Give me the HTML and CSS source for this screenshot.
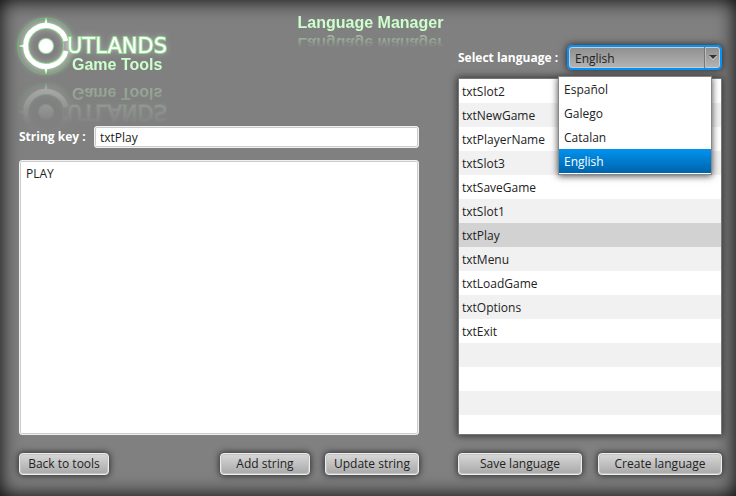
FILE: index.html
```html
<!DOCTYPE html>
<html lang="en">
<head>
<meta charset="utf-8">
<title>Language Manager</title>
<link rel="stylesheet" href="styles.css">
</head>
<body>
<main class="app">
  <h1 class="title">Language Manager</h1>

  <section class="editor">
    <div class="brand">
      <svg class="emblem" viewBox="0 0 60 64" aria-hidden="true">
        <circle class="glow" cx="29" cy="30" r="22"/>
        <path class="orbit" d="M55.500 22A28 28 0 1 0 53 44"/>
        <path class="spikes" d="M29 1L32 10H26ZM29 59L32 50H26ZM1 30L10 27V33Z"/>
        <path class="ring-edge" d="M49 25A20.500 20.500 0 1 0 49 35"/>
        <circle class="inner" cx="29" cy="30" r="17.500"/>
        <path class="ring" d="M49 25A20.500 20.500 0 1 0 49 35"/>
        <path class="tips" d="M29 2L31 11H27ZM29 58L31 49H27ZM2 30L11 28V32Z"/>
        <circle class="core-edge" cx="29" cy="30" r="8"/>
        <circle class="core" cx="29" cy="30" r="7"/>
      </svg>
      <div class="wordmark">
        <span class="name">UTLANDS</span>
        <span class="suite">Game Tools</span>
      </div>
    </div>
    <div class="field">
      <label for="key">String key :</label>
      <input id="key" type="text" value="txtPlay">
    </div>
    <textarea id="value" aria-label="String value">PLAY</textarea>
    <div class="actions">
      <button class="back" type="button">Back to tools</button>
      <button type="button">Add string</button>
      <button type="button">Update string</button>
    </div>
  </section>

  <section class="strings">
    <div class="picker">
      <label for="language">Select language :</label>
      <div class="combo">
        <select id="language">
          <option>Español</option>
          <option>Galego</option>
          <option>Catalan</option>
          <option selected>English</option>
        </select>
        <span class="arrow"><svg viewBox="0 0 8 5" aria-hidden="true"><path class="lip" d="M0 1H8L4 5Z"/><path d="M0 0H8L4 4Z"/></svg></span>
        <ul class="menu" role="listbox" aria-label="Languages">
          <li role="option">Español</li>
          <li role="option">Galego</li>
          <li role="option">Catalan</li>
          <li role="option" aria-selected="true">English</li>
        </ul>
      </div>
    </div>
    <ul class="list" role="listbox" aria-label="String keys">
      <li role="option">txtSlot2</li>
      <li role="option">txtNewGame</li>
      <li role="option">txtPlayerName</li>
      <li role="option">txtSlot3</li>
      <li role="option">txtSaveGame</li>
      <li role="option">txtSlot1</li>
      <li role="option" aria-selected="true">txtPlay</li>
      <li role="option">txtMenu</li>
      <li role="option">txtLoadGame</li>
      <li role="option">txtOptions</li>
      <li role="option">txtExit</li>
    </ul>
    <div class="actions wide">
      <button type="button">Save language</button>
      <button type="button">Create language</button>
    </div>
  </section>
</main>
</body>
</html>
```
FILE: styles.css
```css
* {
  box-sizing: border-box;
}

body {
  margin: 0;
  background: #808080;
  color: #222;
  font: 12px/16px "Open Sans", "Noto Sans", sans-serif;
}

.app {
  display: grid;
  grid-template-columns: 400fr 264fr;
  grid-template-rows: 45px 1fr;
  column-gap: 39px;
  min-height: 100vh;
  padding: 0 14px 21px 19px;
  box-shadow: inset 0 0 20px #000;
}

.title {
  grid-area: 1 / 1 / 2 / 3;
  justify-self: center;
  margin: 12px 0 0;
  height: 22px;
  color: #ccffcc;
  font: bold 16px/22px "Liberation Sans", Arial, sans-serif;
  -webkit-box-reflect: below -2px linear-gradient(transparent 30%, rgba(0, 0, 0, 0.6));
}

.editor {
  grid-area: 1 / 1 / 3 / 2;
  display: flex;
  flex-direction: column;
}

.strings {
  grid-area: 2 / 2 / 3 / 3;
  display: flex;
  flex-direction: column;
}

.brand {
  display: flex;
  align-self: flex-start;
  height: 63px;
  margin: 16px 0 47px -2px;
  -webkit-box-reflect: below 0 linear-gradient(rgba(0, 0, 0, 0.02) 30%, rgba(0, 0, 0, 0.4));
}

.emblem {
  width: 60px;
  height: 64px;
  overflow: visible;
  fill: none;
}

.glow {
  stroke: #fff;
  stroke-width: 9;
  opacity: 0.4;
  filter: blur(3px);
}

.orbit {
  stroke: #62c462;
  stroke-width: 1;
}

.ring-edge {
  stroke: #7fd87f;
  stroke-width: 6;
}

.inner {
  stroke: #8fdc8f;
  stroke-width: 1;
}

.ring {
  stroke: #fff;
  stroke-width: 5;
}

.spikes {
  fill: #8fdc8f;
}

.tips,
.core {
  fill: #fff;
}

.core-edge {
  fill: #a6dca6;
}

.wordmark {
  display: flex;
  flex-direction: column;
  margin: 19px 0 0 -10px;
}

.name {
  color: #fff;
  font-family: "DejaVu Sans", sans-serif;
  font-size: 21px;
  line-height: 22px;
  -webkit-text-stroke: 2px #7fd87f;
  paint-order: stroke fill;
  text-shadow: 0 0 6px rgba(255, 255, 255, 0.6);
}

.suite {
  margin-left: 5px;
  color: #ccffcc;
  font-family: "Liberation Sans", Arial, sans-serif;
  font-size: 16px;
  font-weight: bold;
  line-height: 16px;
}

label {
  color: #fff;
  font-weight: bold;
  white-space: nowrap;
}

.field {
  display: flex;
  align-items: center;
  justify-content: space-between;
}

.field input {
  width: 325px;
  height: 22px;
  padding: 0 5px;
}

input,
textarea {
  border: 1px solid #f0f0f0;
  border-radius: 3px;
  outline: 0;
  background: #fff;
  box-shadow: inset 0 0 0 1px #ccc;
  color: #222;
  font: inherit;
}

textarea {
  flex: 1;
  margin: 12px 0 18px;
  padding: 5px 6px;
  resize: none;
}

.actions {
  display: flex;
  gap: 15px;
}

.actions.wide {
  gap: 16px;
}

.actions.wide button {
  flex: 1;
}

.back {
  margin-right: auto;
}

button {
  min-width: 90px;
  height: 22px;
  padding: 0 8px;
  border: 1px solid #eee;
  border-radius: 4px;
  background: linear-gradient(#d8d8d8, #a8a8a8);
  box-shadow: inset 0 0 0 1px #c4c4c4, 0 0 6px 1px #333;
  color: #222;
  font: inherit;
  line-height: 20px;
  white-space: nowrap;
}

.picker {
  display: flex;
  align-items: center;
  justify-content: space-between;
}

.combo {
  position: relative;
  width: 155px;
  height: 25px;
}

.combo select {
  appearance: none;
  width: 100%;
  height: 25px;
  padding: 2px 28px 0 6px;
  border: 2px solid #0093ff;
  border-radius: 5px;
  outline: 0;
  background: linear-gradient(#8e8e8e, #b4b4b4);
  box-shadow: inset 0 0 0 1px #ccc, 0 0 7px 1px #333;
  color: #222;
  font: inherit;
}

.arrow {
  position: absolute;
  top: 2px;
  right: 2px;
  bottom: 2px;
  display: flex;
  align-items: center;
  justify-content: center;
  width: 16px;
  border-left: 1px solid #777;
  box-shadow: inset 1px 0 #bbb;
  pointer-events: none;
}

.arrow svg {
  width: 8px;
  height: 5px;
  fill: #333;
}

.arrow .lip {
  fill: #ddd;
}

ul {
  margin: 0;
  padding: 0;
  list-style: none;
}

.menu {
  position: absolute;
  z-index: 1;
  top: 31px;
  right: 10px;
  width: 154px;
  padding: 0 0 1px;
  border: 1px solid #888;
  background: #fff;
  box-shadow: 0 1px 7px #444;
}

li {
  height: 24px;
  line-height: 26px;
}

.menu li {
  padding: 0 5px;
}

.menu [aria-selected="true"] {
  background: linear-gradient(#0093f0, #0063ab);
  color: #fff;
}

.list {
  flex: 1;
  margin: 8px 0 18px;
  padding: 0;
  border: 1px solid #777;
  background: repeating-linear-gradient(#fff 0 24px, #f1f1f1 24px 48px);
  box-shadow: 0 0 7px 1px #333;
}

.list li {
  padding: 0 3px;
}

.list [aria-selected="true"] {
  background: #d2d2d2;
}
```
